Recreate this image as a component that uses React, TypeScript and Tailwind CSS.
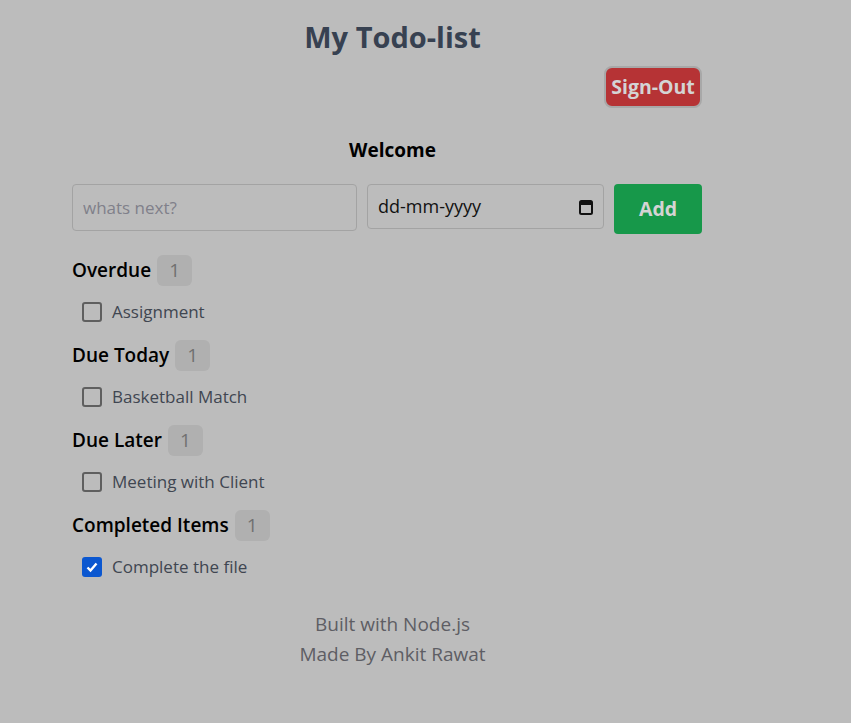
import React from 'react';

const sections = [
  { title: 'Overdue', items: [{ text: 'Assignment', done: false }] },
  { title: 'Due Today', items: [{ text: 'Basketball Match', done: false }] },
  { title: 'Due Later', items: [{ text: 'Meeting with Client', done: false }] },
  { title: 'Completed Items', items: [{ text: 'Complete the file', done: true }] },
];

export default function App() {
  return (
    <div className="min-h-[723px] bg-[#bcbcbc] font-['Open_Sans',sans-serif]">
      <div className="ml-[72px] w-[641px] pt-[18px]">
        <h1 className="text-center text-[29px] leading-[38px] font-bold text-[#374151]">My Todo-list</h1>
        <div className="mt-[10px] flex justify-end pr-[11px]">
          <button className="h-[42px] w-[98px] rounded-lg border-2 border-[#a8a8a8] bg-[#b63335] text-[19.5px] font-bold text-[#d4d4d4]">
            Sign-Out
          </button>
        </div>
        <h2 className="mt-[30px] text-center text-[19px] leading-[24px] font-bold text-black">Welcome</h2>
        <form className="mt-[22px] flex w-[630px] items-start gap-[10px]">
          <input
            type="text"
            placeholder="whats next?"
            className="h-[47px] w-[285px] rounded border border-[#a3a3a3] px-[10px] text-[17px] text-gray-900 placeholder-[#80808a] outline-none"
          />
          <div className="flex h-[45px] w-[237px] items-center justify-between rounded border border-[#a3a3a3] px-[10px] text-[18px] text-[#111]">
            <span>dd-mm-yyyy</span>
            <svg width="14" height="16" viewBox="0 0 14 16">
              <rect x="1" y="2" width="12" height="13" rx="1.5" fill="none" stroke="#111" strokeWidth="2" />
              <rect x="1" y="2" width="12" height="4" fill="#111" />
            </svg>
          </div>
          <button type="button" className="h-[50px] w-[88px] rounded bg-[#17984a] text-[19.5px] font-bold text-[#d4d4d4]">
            Add
          </button>
        </form>
        <div className="mt-[21px] flex flex-col">
          {sections.map((s) => (
            <div key={s.title} className="h-[85px]">
              <div className="flex items-center gap-[6px]">
                <span className="text-[19px] font-semibold text-black">{s.title}</span>
                <span className="flex h-[31px] w-[35px] items-center justify-center rounded-md bg-[#b0b0b0] text-[19px] text-[#707070]">
                  1
                </span>
              </div>
              {s.items.map((it) => (
                <label key={it.text} className="mt-[13px] ml-[10px] flex items-center gap-[10px]">
                  {it.done ? (
                    <span className="flex h-[20px] w-[20px] items-center justify-center rounded-[3px] bg-[#0b57d0]">
                      <svg width="14" height="14" viewBox="0 0 14 14">
                        <path d="M2.5 7.5 L5.5 10.5 L11.5 3.5" fill="none" stroke="white" strokeWidth="2.4" />
                      </svg>
                    </span>
                  ) : (
                    <span className="h-[20px] w-[20px] rounded-[3px] border-2 border-[#5f5f5f]" />
                  )}
                  <span className="text-[17px] text-[#404651]">{it.text}</span>
                </label>
              ))}
            </div>
          ))}
        </div>
        <div className="mt-[14px] text-center text-[19px] leading-[30px] text-[#5e5e64]">
          <p>Built with Node.js</p>
          <p>Made By Ankit Rawat</p>
        </div>
      </div>
    </div>
  );
}
